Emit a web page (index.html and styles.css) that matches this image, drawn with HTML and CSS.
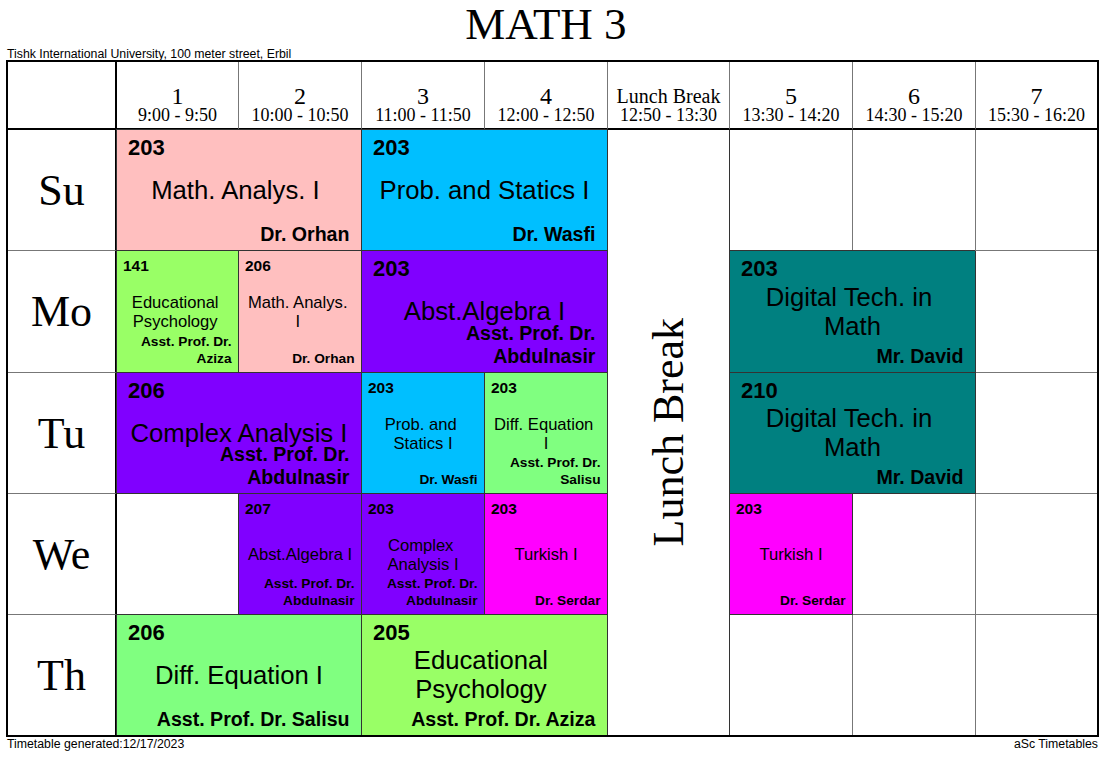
FILE: index.html
```html
<!DOCTYPE html>
<html>
<head>
<meta charset="utf-8">
<title>MATH 3</title>
<link rel="stylesheet" href="styles.css">
</head>
<body>
<div class="page">
  <h1 class="title">MATH 3</h1>
  <div class="school">Tishk International University, 100 meter street, Erbil</div>
  <div class="frame">
    <div class="grid">
      <!-- header -->
      <div class="c hd day-h"></div>
      <div class="c hd"><span class="num">1</span><span class="tm">9:00 - 9:50</span></div>
      <div class="c hd"><span class="num">2</span><span class="tm">10:00 - 10:50</span></div>
      <div class="c hd"><span class="num">3</span><span class="tm">11:00 - 11:50</span></div>
      <div class="c hd"><span class="num">4</span><span class="tm">12:00 - 12:50</span></div>
      <div class="c hd"><span class="lb">Lunch Break</span><span class="tm">12:50 - 13:30</span></div>
      <div class="c hd"><span class="num">5</span><span class="tm">13:30 - 14:20</span></div>
      <div class="c hd"><span class="num">6</span><span class="tm">14:30 - 15:20</span></div>
      <div class="c hd"><span class="num">7</span><span class="tm">15:30 - 16:20</span></div>

      <div class="c lunch"><span>Lunch Break</span></div>

      <!-- Sunday -->
      <div class="c day">Su</div>
      <div class="c ev big s2 pink"><b class="rm">203</b><span class="sub">Math. Analys. I </span><b class="tc">Dr. Orhan</b></div>
      <div class="c ev big s2 cyan"><b class="rm">203</b><span class="sub">Prob. and Statics I</span><b class="tc">Dr. Wasfi</b></div>
      <div class="c"></div>
      <div class="c"></div>
      <div class="c"></div>

      <!-- Monday -->
      <div class="c day">Mo</div>
      <div class="c ev sm lime"><b class="rm">141</b><span class="sub">Educational <br>Psychology </span><b class="tc">Asst. Prof. Dr.<br>Aziza</b></div>
      <div class="c ev sm pink"><b class="rm">206</b><span class="sub">Math. Analys. <br>I </span><b class="tc">Dr. Orhan</b></div>
      <div class="c ev big s2 purple"><b class="rm">203</b><span class="sub">Abst.Algebra I</span><b class="tc">Asst. Prof. Dr.<br>Abdulnasir</b></div>
      <div class="c ev big s2 teal"><b class="rm">203</b><span class="sub">Digital Tech. in <br>Math</span><b class="tc">Mr. David</b></div>
      <div class="c"></div>

      <!-- Tuesday -->
      <div class="c day">Tu</div>
      <div class="c ev big s2 purple"><b class="rm">206</b><span class="sub">Complex Analysis I</span><b class="tc">Asst. Prof. Dr.<br>Abdulnasir</b></div>
      <div class="c ev sm cyan"><b class="rm">203</b><span class="sub">Prob. and <br>Statics I</span><b class="tc">Dr. Wasfi</b></div>
      <div class="c ev sm mint"><b class="rm">203</b><span class="sub">Diff. Equation <br>I</span><b class="tc">Asst. Prof. Dr.<br>Salisu</b></div>
      <div class="c ev big s2 teal"><b class="rm">210</b><span class="sub">Digital Tech. in <br>Math</span><b class="tc">Mr. David</b></div>
      <div class="c"></div>

      <!-- Wednesday -->
      <div class="c day">We</div>
      <div class="c"></div>
      <div class="c ev sm purple"><b class="rm">207</b><span class="sub">Abst.Algebra I</span><b class="tc">Asst. Prof. Dr.<br>Abdulnasir</b></div>
      <div class="c ev sm purple"><b class="rm">203</b><span class="sub">Complex <br>Analysis I</span><b class="tc">Asst. Prof. Dr.<br>Abdulnasir</b></div>
      <div class="c ev sm magenta"><b class="rm">203</b><span class="sub">Turkish I</span><b class="tc">Dr. Serdar</b></div>
      <div class="c ev sm magenta"><b class="rm">203</b><span class="sub">Turkish I</span><b class="tc">Dr. Serdar</b></div>
      <div class="c"></div>
      <div class="c"></div>

      <!-- Thursday -->
      <div class="c day">Th</div>
      <div class="c ev big s2 mint"><b class="rm">206</b><span class="sub">Diff. Equation I</span><b class="tc">Asst. Prof. Dr. Salisu</b></div>
      <div class="c ev big s2 lime"><b class="rm">205</b><span class="sub">Educational <br>Psychology </span><b class="tc">Asst. Prof. Dr. Aziza</b></div>
      <div class="c"></div>
      <div class="c"></div>
      <div class="c"></div>
    </div>
  </div>
  <div class="foot"><span>Timetable generated:12/17/2023</span><span>aSc Timetables</span></div>
</div>
</body>
</html>
```

FILE: styles.css
```css
* { box-sizing: border-box; }

html, body {
  margin: 0;
  padding: 0;
  background: #ffffff;
  color: #000000;
}

.page {
  width: 1101px;
}

.title {
  margin: 0;
  height: 48px;
  font-family: "Liberation Serif", "Times New Roman", serif;
  font-weight: normal;
  font-size: 45px;
  line-height: 48px;
  text-align: center;
  padding-right: 9px;
  white-space: nowrap;
}

.school {
  height: 12px;
  padding-left: 7px;
  font-family: "Liberation Sans", Arial, sans-serif;
  font-size: 12.3px;
  line-height: 12px;
  white-space: nowrap;
}

.frame {
  margin-left: 6px;
  width: 1093px;
  height: 677px;
  border: 2px solid #000;
  overflow: hidden;
}

.grid {
  display: grid;
  width: 1090px;
  grid-template-columns: 109px 122px 123px 123px 123px 122px 123px 123px 122px;
  grid-template-rows: 68px 121px 122px 121px 121px 121px;
}

.c {
  background: #fff;
  border-right: 1px solid #777;
  border-bottom: 1px solid #777;
  min-width: 0;
  min-height: 0;
}

/* header */
.hd {
  border-bottom: 2px solid #000;
  display: flex;
  flex-direction: column;
  justify-content: flex-end;
  align-items: center;
  padding-bottom: 4px;
  font-family: "Liberation Serif", "Times New Roman", serif;
  white-space: nowrap;
}
.hd .num { font-size: 24px; line-height: 20px; }
.hd .lb { font-size: 20px; line-height: 20px; }
.hd .tm { font-size: 18px; line-height: 18px; }
.day-h { border-right: 2px solid #000; }

/* day labels */
.day {
  border-right: 2px solid #000;
  display: flex;
  align-items: center;
  justify-content: center;
  font-family: "Liberation Serif", "Times New Roman", serif;
  font-size: 44px;
}

/* lunch column */
.lunch {
  grid-column: 6;
  grid-row: 2 / span 5;
  border-right-color: #333;
  box-shadow: -1px 0 0 #333;
  display: flex;
  align-items: center;
  justify-content: center;
}
.lunch span {
  writing-mode: vertical-rl;
  transform: rotate(180deg);
  font-family: "Liberation Serif", "Times New Roman", serif;
  font-size: 44px;
  line-height: 44px;
  white-space: nowrap;
}

/* events */
.ev {
  display: grid;
  grid-template-columns: minmax(0, 1fr);
  grid-template-rows: minmax(0, 1fr);
  border-color: #333;
  box-shadow: -1px -1px 0 #333;
  font-family: "Liberation Sans", Arial, sans-serif;
  white-space: nowrap;
}
.ev > * { grid-area: 1 / 1; }
.ev .rm { align-self: start; justify-self: start; font-weight: bold; margin-left: 1px; }
.ev .sub { align-self: center; justify-self: center; text-align: center; font-weight: normal; white-space: pre; }
.ev .tc { align-self: end; justify-self: end; text-align: right; font-weight: bold; margin-right: 1.5px; }

.s2 { grid-column: span 2; }

.big { padding: 5px 10px; }
.big .rm { font-size: 22px; line-height: 25px; }
.big .sub { font-size: 25.7px; line-height: 29px; }
.big .tc { font-size: 19.6px; line-height: 22.5px; }

.sm { padding: 6px 5px 5px 5px; }
.sm .rm { font-size: 15.5px; line-height: 18px; }
.sm .sub { font-size: 16.6px; line-height: 19px; }
.sm .tc { font-size: 13.7px; line-height: 16.5px; }

.pink { background: #ffbfbf; }
.cyan { background: #00bfff; }
.purple { background: #8000ff; }
.teal { background: #008080; }
.lime { background: #99ff66; }
.mint { background: #80ff80; }
.magenta { background: #ff00ff; }

/* footer */
.foot {
  margin-left: 6px;
  width: 1093px;
  display: flex;
  justify-content: space-between;
  padding: 0 1px 0 1px;
  font-family: "Liberation Sans", Arial, sans-serif;
  font-size: 12.3px;
  line-height: 14px;
  white-space: nowrap;
}
```
